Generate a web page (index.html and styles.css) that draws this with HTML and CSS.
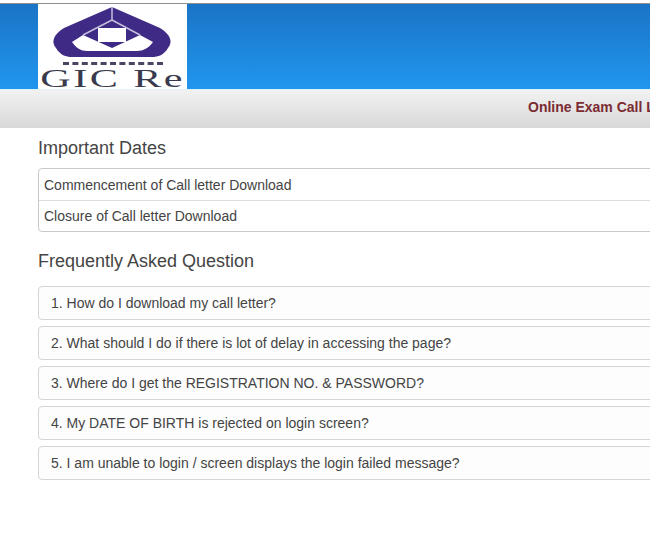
FILE: index.html
```html
<!DOCTYPE html>
<html lang="en">
  <head>
    <meta charset="utf-8" />
    <title>GIC Re Online Exam Call Letter</title>
    <link rel="stylesheet" href="styles.css">
  </head>

  <body>
    <div class="page">
      <div id="header">
        <div class="logo">
          <svg class="logo-mark" width="149" height="56" viewBox="0 0 149 56">
            <path d="M74 3 L26 24 C15 31 13 38 18 44 C22 51 28 53 34 53 L114 53 C120 53 126 51 130 44 C135 38 133 31 122 24 Z" fill="#3f2a85"/>
            <path d="M34 38 L45 31 L74 44 L102 31 L115 38 C111 44 105 47 99 47 L49 47 C43 47 38 44 34 38 Z" fill="#fff"/>
            <rect x="60" y="24" width="28" height="14" fill="#fff"/>
            <path d="M74 3 V16 L45 31 M74 16 L102 31" stroke="#c4bfdc" stroke-width="1.5" fill="none"/>
          </svg>
          <div class="logo-tag"></div>
          <div class="logo-name">GIC Re</div>
        </div>
      </div>

      <div id="titlebar">
        <span class="call-title">Online Exam Call Letter</span>
      </div>

      <div class="content">
        <h4 class="section-title">Important Dates</h4>
        <div class="dates">
          <div class="date-row">Commencement of Call letter Download</div>
          <div class="date-row">Closure of Call letter Download</div>
        </div>

        <h4 class="section-title faq-title">Frequently Asked Question</h4>
        <div class="faq">
          <div class="faq-item">1. How do I download my call letter?</div>
          <div class="faq-item">2. What should I do if there is lot of delay in accessing the page?</div>
          <div class="faq-item">3. Where do I get the REGISTRATION NO. &amp; PASSWORD?</div>
          <div class="faq-item">4. My DATE OF BIRTH is rejected on login screen?</div>
          <div class="faq-item">5. I am unable to login / screen displays the login failed message?</div>
        </div>
      </div>
    </div>
  </body>
</html>
```

FILE: styles.css
```css
html, body {
  margin: 0;
  padding: 0;
  background: #fff;
  overflow: hidden;
}

.page {
  width: 650px;
  height: 540px;
  overflow: hidden;
  padding-top: 3px;
  box-sizing: border-box;
  font-family: "Liberation Sans", Arial, sans-serif;
  font-size: 14px;
  color: #444;
}

#header {
  height: 86px;
  padding-left: 38px;
  border-top: 1px solid #8a8f94;
  box-sizing: border-box;
  background: linear-gradient(to bottom, #1a74c6, #2196ee);
}

.logo {
  width: 149px;
  height: 85px;
  background: #fff;
  display: flex;
  flex-direction: column;
  align-items: center;
}

.logo-mark {
  flex: none;
}

.logo-tag {
  width: 100px;
  height: 3px;
  margin-top: 2px;
  flex: none;
  border-top: 3px dashed #4a4560;
  box-sizing: border-box;
}

.logo-name {
  margin-top: 3px;
  font-family: "Liberation Serif", "Times New Roman", serif;
  font-size: 26px;
  line-height: 21px;
  letter-spacing: 1.5px;
  color: #3a3a4e;
  white-space: nowrap;
  transform: scaleX(1.62);
}

#titlebar {
  height: 39px;
  box-sizing: border-box;
  padding-left: 528px;
  background: linear-gradient(to bottom, #f2f2f2, #d8d8d8);
  border-top: 1px solid #dff3fb;
  line-height: 35px;
  white-space: nowrap;
  overflow: hidden;
}

.call-title {
  font-weight: bold;
  color: #7b2b32;
}

.content {
  padding-left: 38px;
  width: 720px;
}

.section-title {
  margin: 0;
  padding-top: 9px;
  font-size: 18px;
  font-weight: normal;
  line-height: 22px;
  color: #444;
}

.faq-title {
  padding-top: 18px;
}

.dates {
  margin-top: 9px;
  border: 1px solid #c9c9c9;
  border-radius: 4px;
  height: 64px;
  box-sizing: border-box;
}

.date-row {
  height: 31px;
  padding-left: 5px;
  line-height: 33px;
  box-sizing: border-box;
}

.date-row + .date-row {
  border-top: 1px solid #ddd;
  line-height: 31px;
}

.faq {
  margin-top: 14px;
  display: flex;
  flex-direction: column;
  gap: 6px;
}

.faq-item {
  height: 34px;
  padding-left: 12px;
  line-height: 32px;
  background: #fdfdfd;
  border: 1px solid #d5d5d5;
  border-radius: 4px;
  box-sizing: border-box;
}
```
